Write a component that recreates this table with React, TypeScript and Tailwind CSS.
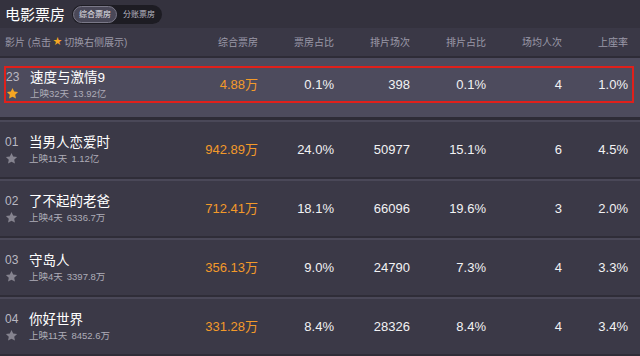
import React from 'react';

type Movie = {
  rank: string;
  name: string;
  days: string;
  total: string;
  box: string;
  boxRate: string;
  shows: string;
  showRate: string;
  avg: string;
  seat: string;
};

const movies: Movie[] = [
  { rank: '01', name: '当男人恋爱时', days: '上映11天', total: '1.12亿', box: '942.89万', boxRate: '24.0%', shows: '50977', showRate: '15.1%', avg: '6', seat: '4.5%' },
  { rank: '02', name: '了不起的老爸', days: '上映4天', total: '6336.7万', box: '712.41万', boxRate: '18.1%', shows: '66096', showRate: '19.6%', avg: '3', seat: '2.0%' },
  { rank: '03', name: '守岛人', days: '上映4天', total: '3397.8万', box: '356.13万', boxRate: '9.0%', shows: '24790', showRate: '7.3%', avg: '4', seat: '3.3%' },
  { rank: '04', name: '你好世界', days: '上映11天', total: '8452.6万', box: '331.28万', boxRate: '8.4%', shows: '28326', showRate: '8.4%', avg: '4', seat: '3.4%' },
];

const font = 'font-["Liberation_Sans","Noto_Sans_CJK_SC",sans-serif]';

function Star({ active }: { active?: boolean }) {
  return (
    <svg width="13" height="13" viewBox="0 0 24 24" className="block">
      <path
        d="M12 1.8l3.1 6.6 7.2.9-5.3 5 1.4 7.1L12 17.9l-6.4 3.5 1.4-7.1-5.3-5 7.2-.9z"
        fill={active ? '#f5a623' : '#85838f'}
      />
    </svg>
  );
}

function Cells({ m }: { m: Movie }) {
  return (
    <>
      <div className="w-[76px] text-right text-[13px] text-[#f39a2a]">{m.box}</div>
      <div className="w-[76px] text-right text-[13px] text-[#f2f2f4]">{m.boxRate}</div>
      <div className="w-[76px] text-right text-[13px] text-[#f2f2f4]">{m.shows}</div>
      <div className="w-[76px] text-right text-[13px] text-[#f2f2f4]">{m.showRate}</div>
      <div className="w-[76px] text-right text-[13px] text-[#f2f2f4]">{m.avg}</div>
      <div className="w-[66px] text-right text-[13px] text-[#f2f2f4]">{m.seat}</div>
    </>
  );
}

function NameCell({ m, active }: { m: Movie; active?: boolean }) {
  return (
    <div className="flex flex-1 items-center">
      <div className="flex w-[24px] flex-col items-start gap-[3px]">
        <span className="text-[12px] leading-[14px] text-[#b9b8c2]">{m.rank}</span>
        <Star active={active} />
      </div>
      <div className="flex flex-col">
        <span className="text-[13.5px] leading-[19px] text-white">{m.name}</span>
        <span className="flex gap-[4px] text-[9.5px] leading-[14px] text-[#aeadb8]">
          <span>{m.days}</span>
          <span>{m.total}</span>
        </span>
      </div>
    </div>
  );
}

export default function App() {
  const top: Movie = { rank: '23', name: '速度与激情9', days: '上映32天', total: '13.92亿', box: '4.88万', boxRate: '0.1%', shows: '398', showRate: '0.1%', avg: '4', seat: '1.0%' };

  return (
    <div className={`h-[356px] w-[640px] overflow-hidden bg-[#34323e] ${font}`}>
      {/* Title bar */}
      <div className="flex h-[28px] items-center gap-[7px] pl-[5px]">
        <span className="text-[15px] leading-none text-white">电影票房</span>
        <div className="flex items-center rounded-full bg-[#1d1c23] p-[1px]">
          <span className="rounded-full border border-[#7a7888] bg-[#4a4858] px-[5px] py-[2px] text-[8px] leading-[11px] text-[#e4e3ea]">综合票房</span>
          <span className="px-[6px] py-[2px] text-[8px] leading-[11px] text-[#b8b7c2]">分账票房</span>
        </div>
      </div>

      {/* Header */}
      <div className="flex h-[30px] items-center border-b-2 border-[#2e2c37] bg-[#3a3846] pl-[5px] pr-[12px] text-[10px] text-[#9b99a8]">
        <div className="flex flex-1 items-center gap-[2px]">
          影片 (点击 <span className="text-[9px] text-[#f5a623]">★</span> 切换右侧展示)
        </div>
        <div className="w-[76px] text-right">综合票房</div>
        <div className="w-[76px] text-right">票房占比</div>
        <div className="w-[76px] text-right">排片场次</div>
        <div className="w-[76px] text-right">排片占比</div>
        <div className="w-[76px] text-right">场均人次</div>
        <div className="w-[66px] text-right">上座率</div>
      </div>

      {/* Highlighted row */}
      <div className="border-b-[3px] border-[#2e2c37] bg-[#4d4b5d] pb-[14px] pl-[4px] pr-[6px] pt-[8px]">
        <div className="flex h-[37px] items-center border-2 border-[#e0201b] pr-[4px]">
          <NameCell m={top} active />
          <Cells m={top} />
        </div>
      </div>

      {/* Rows */}
      {movies.map((m) => (
        <div
          key={m.rank}
          className="flex h-[59px] items-center border-t-2 border-[#4a4858] border-b-[2px] border-b-[#2f2d38] bg-[#3b3947] pl-[5px] pr-[12px]"
        >
          <NameCell m={m} />
          <Cells m={m} />
        </div>
      ))}
    </div>
  );
}
